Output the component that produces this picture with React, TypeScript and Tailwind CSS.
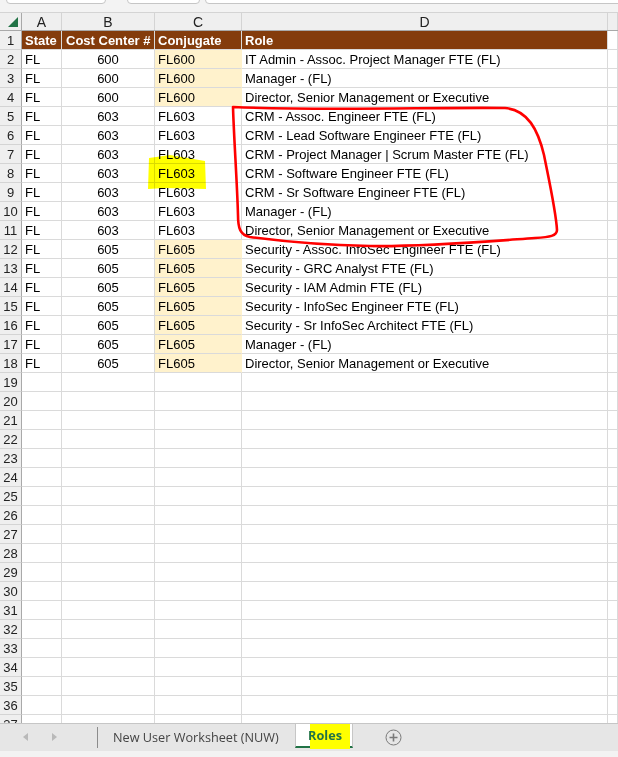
import React from 'react';

const rows = [
  ['FL', '600', 'FL600', 'IT Admin - Assoc. Project Manager FTE (FL)'],
  ['FL', '600', 'FL600', 'Manager - (FL)'],
  ['FL', '600', 'FL600', 'Director, Senior Management or Executive'],
  ['FL', '603', 'FL603', 'CRM - Assoc. Engineer FTE (FL)'],
  ['FL', '603', 'FL603', 'CRM - Lead Software Engineer FTE (FL)'],
  ['FL', '603', 'FL603', 'CRM - Project Manager | Scrum Master FTE (FL)'],
  ['FL', '603', 'FL603', 'CRM - Software Engineer FTE (FL)'],
  ['FL', '603', 'FL603', 'CRM - Sr Software Engineer FTE (FL)'],
  ['FL', '603', 'FL603', 'Manager - (FL)'],
  ['FL', '603', 'FL603', 'Director, Senior Management or Executive'],
  ['FL', '605', 'FL605', 'Security - Assoc. InfoSec Engineer FTE (FL)'],
  ['FL', '605', 'FL605', 'Security - GRC Analyst FTE (FL)'],
  ['FL', '605', 'FL605', 'Security - IAM Admin FTE (FL)'],
  ['FL', '605', 'FL605', 'Security - InfoSec Engineer FTE (FL)'],
  ['FL', '605', 'FL605', 'Security - Sr InfoSec Architect FTE (FL)'],
  ['FL', '605', 'FL605', 'Manager - (FL)'],
  ['FL', '605', 'FL605', 'Director, Senior Management or Executive'],
];

const cols = 'grid grid-cols-[22px_40px_93px_87px_366px_1fr]';
const cell = 'h-[19px] border-r border-b border-[#dadada] overflow-visible whitespace-nowrap leading-[19px]';
const rowHead = 'h-[19px] border-r border-b border-[#d4d4d4] border-r-[#a9a9a9] bg-[#efefef] text-[13px] text-[#222] text-center leading-[19px]';

export default function App() {
  const empty = Array.from({ length: 19 }, (_, i) => i + 19);

  return (
    <div className="relative w-[618px] h-[757px] overflow-hidden bg-white flex flex-col text-black font-['Liberation_Sans',Arial,sans-serif]">
      {/* formula bar remnants */}
      <div className="h-[12px] bg-[#f3f3f3] relative shrink-0">
        <div className="absolute left-[6px] top-[-6px] w-[100px] h-[10px] bg-white border border-[#c6c6c6] rounded-[4px]" />
        <div className="absolute left-[127px] top-[-6px] w-[73px] h-[10px] bg-white border border-[#c6c6c6] rounded-[4px]" />
        <div className="absolute left-[205px] top-[-6px] w-[430px] h-[10px] bg-white border border-[#c6c6c6] rounded-[4px]" />
      </div>

      {/* column header */}
      <div className={`${cols} h-[19px] shrink-0 bg-[#efefef] border-t border-[#d4d4d4] border-b border-b-[#a9a9a9] text-[14px] text-[#222]`}>
        <div className="relative border-r border-[#a9a9a9]">
          <svg width="12" height="11" className="absolute left-[7px] top-[4px]">
            <polygon points="11,0 11,10 1,10" fill="#217346" />
          </svg>
        </div>
        {['A', 'B', 'C', 'D', ''].map((c, i) => (
          <div key={i} className="border-r border-[#d4d4d4] flex items-center justify-center leading-none">
            {c}
          </div>
        ))}
      </div>

      {/* sheet body */}
      <div className="flex-1 overflow-hidden text-[13px]">
        <div className={cols}>
          <div className={rowHead}>1</div>
          <div className={`${cell} bg-[#843c0c] border-[#843c0c] border-b-[#dadada] text-white font-bold pl-[3px]`}>State</div>
          <div className={`${cell} bg-[#843c0c] border-[#843c0c] border-b-[#dadada] text-white font-bold pl-[4px]`}>Cost Center #</div>
          <div className={`${cell} bg-[#843c0c] border-[#843c0c] border-b-[#dadada] text-white font-bold pl-[3px]`}>Conjugate</div>
          <div className={`${cell} bg-[#843c0c] border-b-[#dadada] text-white font-bold pl-[3px]`}>Role</div>
          <div className={cell} />
        </div>
        {rows.map((r, i) => {
          const n = i + 2;
          const peach = r[2] !== 'FL603';
          return (
            <div key={n} className={cols}>
              <div className={rowHead}>{n}</div>
              <div className={`${cell} pl-[3px]`}>{r[0]}</div>
              <div className={`${cell} text-center`}>{r[1]}</div>
              <div className={`${cell} pl-[3px] ${peach ? 'bg-[#fff2cc] border-r-[#fff2cc]' : ''}`}>{r[2]}</div>
              <div className={`${cell} pl-[3px]`}>{r[3]}</div>
              <div className={cell} />
            </div>
          );
        })}
        {empty.map((n) => (
          <div key={n} className={cols}>
            <div className={rowHead}>{n}</div>
            <div className={cell} />
            <div className={cell} />
            <div className={cell} />
            <div className={cell} />
            <div className={cell} />
          </div>
        ))}
      </div>

      {/* sheet tabs */}
      <div className="h-[28px] shrink-0 bg-[#e6e6e6] border-t border-[#c6c6c6] flex items-stretch text-[12.7px] font-['Open_Sans','Liberation_Sans',sans-serif]">
        <div className="w-[97px] flex items-center">
          <svg width="6" height="9" className="ml-[23px]">
            <polygon points="5,0 5,8 0,4" fill="#b9b9b9" />
          </svg>
          <svg width="6" height="9" className="ml-[23px]">
            <polygon points="0,0 0,8 5,4" fill="#b9b9b9" />
          </svg>
        </div>
        <div className="w-px bg-[#8c8c8c] my-[3px]" />
        <div className="w-[197px] flex items-center pl-[15px] text-[#444]">New User Worksheet (NUW)</div>
        <div className="relative w-[58px] bg-white border-x border-[#c6c6c6] border-b-2 border-b-[#217346] mb-[3px] flex items-center justify-center">
          <div className="absolute left-[14px] top-0 w-[40px] h-[25px] bg-[#ffff00]" />
          <span className="relative font-bold text-[#217346] ml-[2px] mt-[2px]">Roles</span>
        </div>
        <div className="flex items-center ml-[32px]">
          <svg width="17" height="17" viewBox="0 0 17 17">
            <circle cx="8.5" cy="8.5" r="7.5" fill="none" stroke="#7a7a7a" strokeWidth="1" />
            <path d="M8.5 4.5v8M4.5 8.5h8" stroke="#7a7a7a" strokeWidth="1.6" />
          </svg>
        </div>
      </div>
      <div className="h-[6px] shrink-0 bg-[#f3f3f3]" />

      {/* annotations */}
      <svg width="618" height="757" className="absolute left-0 top-0 pointer-events-none mix-blend-multiply">
        <path d="M149 158 L170 155 L205 161 L206 189 L165 188 L148 189 Z" fill="#ffff00" />
      </svg>
      <svg width="618" height="757" className="absolute left-0 top-0 pointer-events-none">
        <path
          d="M233 107 C 320 111, 440 107, 505 108 C 528 110, 538 130, 544 155 C 550 185, 556 212, 557 230 C 557 236, 550 237, 535 238 C 480 242, 420 247, 370 246 C 320 245, 280 241, 250 237 C 240 235, 238 228, 238 215 C 237 180, 234 140, 233 107"
          fill="none"
          stroke="#ff0000"
          strokeWidth="2.6"
          strokeLinecap="round"
        />
      </svg>
    </div>
  );
}
